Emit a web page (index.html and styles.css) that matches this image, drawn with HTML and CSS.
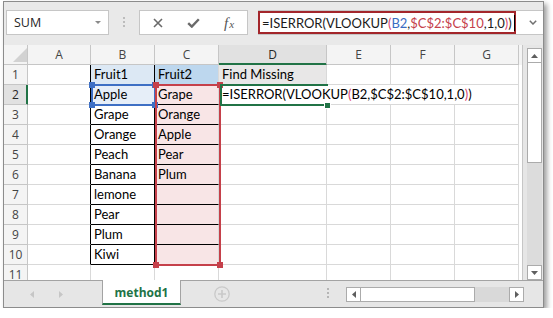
FILE: index.html
```html
<!DOCTYPE html>
<html>
<head>
<meta charset="utf-8">
<title>Find Missing</title>
<link rel="stylesheet" href="styles.css">
</head>
<body>
<div class="window">
  <div class="fbar">
    <div class="namebox">
      <span>SUM</span>
      <svg class="nb-arrow" width="6" height="3" viewBox="0 0 6 3"><path d="M0 0H6L3 3Z" fill="#8a8a8a"/></svg>
    </div>
    <svg class="grip" width="2" height="10" viewBox="0 0 2 10"><rect y="0" width="2" height="2"/><rect y="4" width="2" height="2"/><rect y="8" width="2" height="2"/></svg>
    <div class="fbtns">
      <svg class="ic-x" width="10" height="10" viewBox="0 0 10 10"><path d="M1 1L9 9M9 1L1 9" stroke="#6a6a6a" stroke-width="1.6" fill="none"/></svg>
      <svg class="ic-ok" width="13" height="10" viewBox="0 0 13 10"><path d="M1.2 5.2L4.8 8.6L11.8 1.2" stroke="#6a6a6a" stroke-width="2.4" fill="none"/></svg>
      <span class="fx"><span class="fx-f">f</span><span class="fx-x">x</span></span>
    </div>
    <div class="fedit">
      <div class="fred"><span class="ftext">=ISERROR(VLOOKUP<span class="pk">(</span><span class="rb">B2</span>,<span class="rr">$C$2:$C$10</span>,1,0<span class="pk">)</span>)</span><span class="caret"></span></div>
      <svg class="chev" width="8" height="5" viewBox="0 0 8 5"><path d="M0.8 0.8L4 4L7.2 0.8" stroke="#707070" stroke-width="1.5" fill="none"/></svg>
    </div>
  </div>

  <div class="main">
    <div class="sheet">
      <!-- header row -->
      <div class="c h corner"><svg width="14" height="14" viewBox="0 0 14 14"><path d="M14 0V14H0Z" fill="#d2d2d2"/></svg></div>
      <div class="c h">A</div>
      <div class="c h">B</div>
      <div class="c h">C</div>
      <div class="c h hsel">D</div>
      <div class="c h">E</div>
      <div class="c h">F</div>
      <div class="c h">G</div>
      <div class="c h fl"></div>

      <!-- row 1 -->
      <div class="c rh">1</div>
      <div class="c kr"></div>
      <div class="c fill-b1 kr">Fruit1</div>
      <div class="c fill-c1">Fruit2</div>
      <div class="c fill-d1">Find Missing</div>
      <div class="c"></div>
      <div class="c"></div>
      <div class="c"></div>
      <div class="c fl"></div>

      <!-- row 2 -->
      <div class="c rh rsel">2</div>
      <div class="c kr"></div>
      <div class="c fill-b2 kr kb">Apple</div>
      <div class="c fill-pk kb">Grape</div>
      <div class="c d2">=ISERROR(VLOOKUP<span class="pk">(</span>B2,$C$2:$C$10,1,0<span class="pk">)</span>)</div>
      <div class="c fl"></div>

      <!-- row 3 -->
      <div class="c rh">3</div>
      <div class="c kr"></div>
      <div class="c kr kb">Grape</div>
      <div class="c fill-pk kb">Orange</div>
      <div class="c"></div><div class="c"></div><div class="c"></div><div class="c"></div>
      <div class="c fl"></div>

      <!-- row 4 -->
      <div class="c rh">4</div>
      <div class="c kr"></div>
      <div class="c kr kb">Orange</div>
      <div class="c fill-pk kb">Apple</div>
      <div class="c"></div><div class="c"></div><div class="c"></div><div class="c"></div>
      <div class="c fl"></div>

      <!-- row 5 -->
      <div class="c rh">5</div>
      <div class="c kr"></div>
      <div class="c kr kb">Peach</div>
      <div class="c fill-pk kb">Pear</div>
      <div class="c"></div><div class="c"></div><div class="c"></div><div class="c"></div>
      <div class="c fl"></div>

      <!-- row 6 -->
      <div class="c rh">6</div>
      <div class="c kr"></div>
      <div class="c kr kb">Banana</div>
      <div class="c fill-pk kb">Plum</div>
      <div class="c"></div><div class="c"></div><div class="c"></div><div class="c"></div>
      <div class="c fl"></div>

      <!-- row 7 -->
      <div class="c rh">7</div>
      <div class="c kr"></div>
      <div class="c kr kb">lemone</div>
      <div class="c fill-pk kb"></div>
      <div class="c"></div><div class="c"></div><div class="c"></div><div class="c"></div>
      <div class="c fl"></div>

      <!-- row 8 -->
      <div class="c rh">8</div>
      <div class="c kr"></div>
      <div class="c kr kb">Pear</div>
      <div class="c fill-pk kb"></div>
      <div class="c"></div><div class="c"></div><div class="c"></div><div class="c"></div>
      <div class="c fl"></div>

      <!-- row 9 -->
      <div class="c rh">9</div>
      <div class="c kr"></div>
      <div class="c kr kb">Plum</div>
      <div class="c fill-pk kb"></div>
      <div class="c"></div><div class="c"></div><div class="c"></div><div class="c"></div>
      <div class="c fl"></div>

      <!-- row 10 -->
      <div class="c rh">10</div>
      <div class="c kr"></div>
      <div class="c kr kb">Kiwi</div>
      <div class="c fill-pk kb"></div>
      <div class="c"></div><div class="c"></div><div class="c"></div><div class="c"></div>
      <div class="c fl"></div>

      <!-- row 11 -->
      <div class="c rh">11</div>
      <div class="c"></div>
      <div class="c"></div>
      <div class="c"></div>
      <div class="c"></div><div class="c"></div><div class="c"></div><div class="c"></div>
      <div class="c fl"></div>

      <!-- reference highlights -->
      <div class="refbox blue"></div>
      <div class="handle h-blue hb1"></div>
      <div class="handle h-blue hb2"></div>
      <div class="handle h-blue hb3"></div>
      <div class="handle h-blue hb4"></div>
      <div class="refbox red"></div>
      <div class="handle h-red hr1"></div>
      <div class="handle h-red hr2"></div>
      <div class="handle h-red hr3"></div>
      <div class="handle h-red hr4"></div>
      <div class="active"></div>
      <div class="fillhandle"></div>
    </div>

    <div class="vscroll">
      <div class="sbtn"><svg width="7" height="4" viewBox="0 0 7 4"><path d="M0 4H7L3.5 0Z" fill="#5f5f5f"/></svg></div>
      <div class="vthumb"></div>
      <div class="vtrack"></div>
      <div class="sbtn"><svg width="7" height="4" viewBox="0 0 7 4"><path d="M0 0H7L3.5 4Z" fill="#5f5f5f"/></svg></div>
    </div>
  </div>

  <div class="tabbar">
    <div class="nav">
      <svg width="4" height="7" viewBox="0 0 4 7"><path d="M4 0V7L0 3.5Z" fill="#c6c6c6"/></svg>
      <svg width="4" height="7" viewBox="0 0 4 7"><path d="M0 0V7L4 3.5Z" fill="#c6c6c6"/></svg>
    </div>
    <div class="tab">method1</div>
    <svg class="plus" width="16" height="16" viewBox="0 0 16 16"><circle cx="8" cy="8" r="7.2" fill="none" stroke="#c9c9c9" stroke-width="1.3"/><path d="M8 4V12M4 8H12" stroke="#c9c9c9" stroke-width="1.6"/></svg>
    <svg class="grip2" width="2" height="10" viewBox="0 0 2 10"><rect y="0" width="2" height="2"/><rect y="4" width="2" height="2"/><rect y="8" width="2" height="2"/></svg>
    <div class="hscroll">
      <div class="sbtn"><svg width="4" height="7" viewBox="0 0 4 7"><path d="M4 0V7L0 3.5Z" fill="#5f5f5f"/></svg></div>
      <div class="hthumb"></div>
      <div class="htrack"></div>
      <div class="sbtn"><svg width="4" height="7" viewBox="0 0 4 7"><path d="M0 0V7L4 3.5Z" fill="#5f5f5f"/></svg></div>
    </div>
  </div>
</div>
</body>
</html>
```
FILE: styles.css
```css
html, body {
  margin: 0;
  padding: 0;
  background: #ffffff;
}

body {
  font-family: "Open Sans", "Noto Sans", sans-serif;
}

.window {
  margin: 1px 0 0 3px;
  width: 539px;
  height: 305px;
  border: 1px solid #8c8c8c;
  box-shadow: 3px 3px 5px rgba(0, 0, 0, 0.38);
  background: #e9e9e9;
  display: flex;
  flex-direction: column;
}

/* ---------- formula bar ---------- */
.fbar {
  height: 43px;
  box-sizing: border-box;
  padding-top: 8px;
  display: flex;
  align-items: flex-start;
  flex: none;
}

.namebox {
  box-sizing: border-box;
  width: 103px;
  height: 25px;
  margin-left: 2px;
  padding: 0 7px;
  background: #fff;
  border: 1px solid #c6c6c6;
  display: flex;
  align-items: center;
  justify-content: space-between;
  font-size: 12.5px;
  color: #262626;
}

.grip {
  margin: 7px 0 0 14px;
  fill: #bcbcbc;
  flex: none;
}

.fbtns {
  box-sizing: border-box;
  width: 109px;
  height: 25px;
  margin-left: 14px;
  background: #fff;
  border: 1px solid #c6c6c6;
  display: flex;
  align-items: center;
  padding-left: 13px;
}

.ic-ok { margin-left: 24px; }

.fx {
  margin-left: 24px;
  font-family: "Liberation Serif", "DejaVu Serif", serif;
  font-style: italic;
  color: #555;
  line-height: 1;
}
.fx-f { font-size: 15px; }
.fx-x { font-size: 11px; margin-left: 1px; }

.fedit {
  box-sizing: border-box;
  flex: 1;
  height: 25px;
  margin-left: 10px;
  background: #fff;
  border: 1px solid #c6c6c6;
  border-right: none;
  border-left: none;
  display: flex;
  align-items: flex-start;
}

.fred {
  box-sizing: border-box;
  width: 258px;
  height: 23px;
  border: 2px solid #a3262b;
  padding-left: 2px;
  display: flex;
  align-items: center;
  font-family: Lato, "Open Sans", sans-serif;
  font-size: 13px;
  color: #1a1a1a;
  white-space: nowrap;
}

.caret {
  display: inline-block;
  width: 1px;
  height: 16px;
  background: #000;
  margin-left: 2px;
}

.chev {
  margin: 9px 0 0 13px;
}

.pk { color: #d9466f; }
.rb { color: #3a6cc2; }
.rr { color: #c5404a; }

/* ---------- sheet ---------- */
.main {
  display: flex;
  height: 235px;
  flex: none;
}

.sheet {
  position: relative;
  width: 519px;
  height: 235px;
  overflow: hidden;
  background: #fff;
  display: grid;
  grid-template-columns: 24px 63px 64px 64px 108px 64px 64px 64px 4px;
  grid-template-rows: repeat(12, 20px);
}

.c {
  box-sizing: border-box;
  border-right: 1px solid #d9d9d9;
  border-bottom: 1px solid #d9d9d9;
  padding: 0 3px;
  font-family: Lato, "Open Sans", sans-serif;
  font-size: 13px;
  line-height: 19px;
  color: #000;
  white-space: nowrap;
  overflow: hidden;
}

.h, .rh {
  background: #f4f4f4;
  border-right-color: #c6c6c6;
  border-bottom-color: #c6c6c6;
  font-family: "Open Sans", "Noto Sans", sans-serif;
  font-size: 12px;
  color: #444;
  text-align: center;
  padding: 0;
}

.corner {
  display: flex;
  align-items: flex-end;
  justify-content: flex-end;
  padding: 0 0 2px 0;
}

.hsel {
  background: #e1e1e1;
  color: #262626;
  border-bottom: 1px solid #217346;
  box-shadow: inset 0 -1px 0 #217346;
}

.rsel {
  background: #e1e1e1;
  color: #262626;
  border-right: 1px solid #217346;
  box-shadow: inset -1px 0 0 #217346;
}

.fl {
  padding: 0;
  border-bottom: none;
  border-right-color: #c6c6c6;
}

.kr { border-right-color: #000; }
.kb { border-bottom-color: #000; }

.fill-b1 { background: #dce8f4; }
.fill-c1 { background: #bdd7ee; }
.fill-b2 { background: #e6eef8; }
.fill-pk { background: #f8e5e6; }
.fill-d1 { background: #e8e7e7; }

.d2 {
  grid-column: span 4;
  overflow: visible;
}

/* reference highlight overlays */
.refbox {
  position: absolute;
  box-sizing: border-box;
  border: 2px solid;
}
.refbox.blue {
  left: 87px; top: 39px; width: 65px; height: 22px;
  border-color: #3e6fc4;
}
.refbox.red {
  left: 151px; top: 39px; width: 66px; height: 182px;
  border-color: #c5404a;
}

.handle {
  position: absolute;
  width: 6px;
  height: 6px;
}
.h-blue { background: #3e6fc4; }
.h-red { background: #c5404a; }
.hb1 { left: 85px; top: 37px; }
.hb2 { left: 148px; top: 37px; }
.hb3 { left: 85px; top: 57px; }
.hb4 { left: 148px; top: 57px; }
.hr1 { left: 149px; top: 37px; }
.hr2 { left: 213px; top: 37px; }
.hr3 { left: 149px; top: 217px; }
.hr4 { left: 213px; top: 217px; }

.active {
  position: absolute;
  box-sizing: border-box;
  left: 216px; top: 39px; width: 108px; height: 22px;
  border: 2px solid #217346;
  border-right: none;
}

.fillhandle {
  position: absolute;
  left: 321px; top: 58px;
  width: 5px; height: 5px;
  background: #217346;
  box-shadow: 0 0 0 1px #fff;
}

/* ---------- scrollbars ---------- */
.vscroll {
  box-sizing: border-box;
  width: 20px;
  height: 235px;
  padding: 3px 1px 0 4px;
  background: #e6e6e6;
  display: flex;
  flex-direction: column;
}

.sbtn {
  box-sizing: border-box;
  width: 15px;
  height: 15px;
  flex: none;
  background: #fff;
  border: 1px solid #ababab;
  display: flex;
  align-items: center;
  justify-content: center;
}

.vthumb {
  box-sizing: border-box;
  height: 100px;
  flex: none;
  background: #fff;
  border: 1px solid #ababab;
  border-top: none;
}

.vtrack {
  flex: 1;
  background: #dcdcdc;
}

/* ---------- sheet tabs ---------- */
.tabbar {
  box-sizing: border-box;
  height: 27px;
  flex: none;
  border-top: 1px solid #a3a3a3;
  background: #e6e6e6;
  display: flex;
  align-items: flex-start;
}

.nav {
  width: 98px;
  height: 26px;
  display: flex;
  align-items: center;
  padding-left: 26px;
  box-sizing: border-box;
  gap: 25px;
}

.tab {
  box-sizing: border-box;
  width: 79px;
  height: 25px;
  margin-top: -1px;
  padding-top: 2px;
  background: #fff;
  border-left: 1px solid #a3a3a3;
  border-right: 1px solid #a3a3a3;
  border-bottom: 2px solid #217346;
  display: flex;
  align-items: center;
  justify-content: center;
  font-family: "Open Sans", "Noto Sans", sans-serif;
  font-weight: bold;
  font-size: 12px;
  color: #217346;
}

.plus {
  margin: 5px 0 0 33px;
  flex: none;
}

.grip2 {
  margin: 7px 0 0 97px;
  fill: #b5b5b5;
  flex: none;
}

.hscroll {
  display: flex;
  height: 15px;
  margin: 6px 0 0 17px;
}

.hthumb {
  box-sizing: border-box;
  width: 114px;
  height: 15px;
  background: #fff;
  border: 1px solid #ababab;
  border-left: none;
}

.htrack {
  width: 34px;
  height: 15px;
  background: #d9d9d9;
}
```
